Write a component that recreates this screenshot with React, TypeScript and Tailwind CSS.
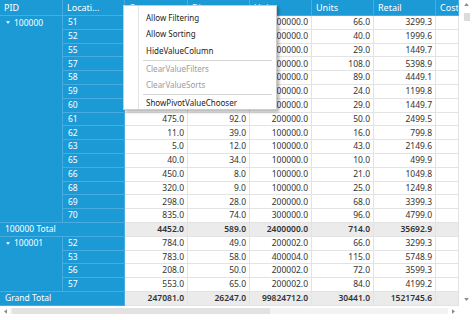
import React from 'react';

type Row = { loc: string; v: string[] };

const group1: Row[] = [
  { loc: '51', v: ['562.0', '41.0', '200000.0', '66.0', '3299.3'] },
  { loc: '52', v: ['12.0', '23.0', '100000.0', '40.0', '1999.6'] },
  { loc: '55', v: ['8.0', '36.0', '200000.0', '29.0', '1449.7'] },
  { loc: '57', v: ['853.0', '78.0', '300000.0', '108.0', '5398.9'] },
  { loc: '58', v: ['253.0', '55.0', '200000.0', '89.0', '4449.1'] },
  { loc: '59', v: ['17.0', '31.0', '100000.0', '24.0', '1199.8'] },
  { loc: '60', v: ['313.0', '29.0', '100000.0', '29.0', '1449.7'] },
  { loc: '61', v: ['475.0', '92.0', '200000.0', '50.0', '2499.5'] },
  { loc: '62', v: ['11.0', '39.0', '100000.0', '16.0', '799.8'] },
  { loc: '63', v: ['5.0', '12.0', '100000.0', '43.0', '2149.6'] },
  { loc: '65', v: ['40.0', '34.0', '100000.0', '10.0', '499.9'] },
  { loc: '66', v: ['450.0', '8.0', '100000.0', '21.0', '1049.8'] },
  { loc: '68', v: ['320.0', '9.0', '100000.0', '25.0', '1249.8'] },
  { loc: '69', v: ['298.0', '28.0', '200000.0', '68.0', '3399.3'] },
  { loc: '70', v: ['835.0', '74.0', '300000.0', '96.0', '4799.0'] },
];

const group2: Row[] = [
  { loc: '52', v: ['784.0', '49.0', '200002.0', '66.0', '3299.3'] },
  { loc: '53', v: ['783.0', '58.0', '400004.0', '115.0', '5748.9'] },
  { loc: '56', v: ['208.0', '50.0', '200002.0', '72.0', '3599.3'] },
  { loc: '57', v: ['553.0', '65.0', '200002.0', '84.0', '4199.2'] },
];

const total1 = ['4452.0', '589.0', '2400000.0', '714.0', '35692.9'];
const grand = ['247081.0', '26247.0', '99824712.0', '30441.0', '1521745.6'];

const blue = 'bg-[#1c9ad6] text-white border-r border-b border-[#47ade0]';

function Tri({ dir, className }: { dir: 'up' | 'down' | 'left' | 'right'; className?: string }) {
  const pts = {
    up: '0,4 3,0 6,4',
    down: '0,0 6,0 3,4',
    left: '4,0 4,6 0,3',
    right: '0,0 0,6 4,3',
  }[dir];
  const w = dir === 'up' || dir === 'down' ? 6 : 4;
  const h = dir === 'up' || dir === 'down' ? 4 : 6;
  return (
    <svg width={w} height={h} viewBox={`0 0 ${w} ${h}`} className={className}>
      <polygon points={pts} fill="currentColor" />
    </svg>
  );
}

function DataCells({ v, total }: { v: string[]; total?: boolean }) {
  return (
    <>
      {v.map((x, i) => (
        <div
          key={i}
          className={`flex items-center justify-end border-r border-b border-[#e3e3e3] pr-[3px] text-[#333] ${total ? 'bg-[#ebebeb] font-semibold' : ''}`}
        >
          {x}
        </div>
      ))}
      <div className={`border-r border-b border-[#e3e3e3] ${total ? 'bg-[#ebebeb]' : ''}`} />
    </>
  );
}

function PidCell({ label, span }: { label: string; span: string }) {
  return (
    <div className={`${blue} ${span}`}>
      <div className="flex h-[13.8px] items-center pl-[6px]">
        <Tri dir="down" className="mr-[4px] h-[3px] w-[4px]" />
        {label}
      </div>
    </div>
  );
}

export default function App() {
  return (
    <div className="relative h-[320px] w-[474px] overflow-hidden bg-white font-['Noto_Sans',sans-serif] text-[8.5px] leading-none">
      <div className="flex">
        <div className="grid w-[459px] grid-cols-[63px_62px_63px_62px_62px_62px_62px_23px] grid-rows-[16px_repeat(21,13.8px)]">
          {['PID', 'Locati...', 'Qty', 'Disc', 'Unit', 'Units', 'Retail', 'Cost'].map((h) => (
            <div
              key={h}
              className="flex items-center overflow-hidden whitespace-nowrap border-r border-b border-[#47ade0] bg-[#1c9ad6] pl-[4px] text-[9px] text-white"
            >
              {h}
            </div>
          ))}

          <PidCell label="100000" span="row-span-15" />
          {group1.map((r, i) => (
            <React.Fragment key={'a' + i}>
              <div className={`${blue} flex items-center pl-[5px]`}>{r.loc}</div>
              <DataCells v={r.v} />
            </React.Fragment>
          ))}

          <div className={`${blue} col-span-2 flex items-center pl-[5px]`}>100000 Total</div>
          <DataCells v={total1} total />

          <PidCell label="100001" span="row-span-4" />
          {group2.map((r, i) => (
            <React.Fragment key={'b' + i}>
              <div className={`${blue} flex items-center pl-[5px]`}>{r.loc}</div>
              <DataCells v={r.v} />
            </React.Fragment>
          ))}

          <div className={`${blue} col-span-2 flex items-center pl-[5px]`}>Grand Total</div>
          <DataCells v={grand} total />
        </div>

        {/* vertical scrollbar */}
        <div className="flex h-[306px] w-[15px] flex-col items-center text-[#8a8a8a]">
          <Tri dir="up" className="mt-[3px] h-[3px] w-[5px]" />
          <div className="mt-[7px] h-[8px] w-[6px] bg-[#dcdcdc]" />
          <div className="flex-1" />
          <Tri dir="down" className="mb-[5px] h-[3px] w-[5px]" />
        </div>
      </div>

      {/* horizontal scrollbar */}
      <div className="flex h-[10px] items-center text-[#8a8a8a]">
        <div className="flex w-[10px] justify-center">
          <Tri dir="left" className="h-[5px] w-[3px]" />
        </div>
        <div className="flex h-[6px] w-[438px] bg-[#f3f3f3] pl-[2px]">
          <div className="h-full w-[258px] bg-[#e2e2e2]" />
        </div>
        <div className="flex w-[10px] justify-center">
          <Tri dir="right" className="h-[5px] w-[3px]" />
        </div>
      </div>

      {/* context menu */}
      <div className="absolute left-[123px] top-[5px] h-[105px] w-[154px] border border-[#cccccc] bg-white pt-[4px] text-[8px] text-[#222] shadow-[2px_2px_3px_rgba(0,0,0,0.3)]">
        <div className="absolute bottom-0 left-[14px] top-0 w-px bg-[#e4e4e4]" />
        <div className="flex h-[16px] items-center pl-[22px]">Allow Filtering</div>
        <div className="flex h-[16px] items-center pl-[22px]">Allow Sorting</div>
        <div className="flex h-[17px] items-center pl-[22px]">HideValueColumn</div>
        <div className="ml-[19px] mr-[4px] flex h-[2px] items-center">
          <div className="h-px w-full bg-[#d4d4d4]" />
        </div>
        <div className="flex h-[16px] items-center pl-[22px] text-[#9c9c9c]">ClearValueFilters</div>
        <div className="flex h-[16px] items-center pl-[22px] text-[#9c9c9c]">ClearValueSorts</div>
        <div className="ml-[19px] mr-[4px] flex h-[2px] items-center">
          <div className="h-px w-full bg-[#d4d4d4]" />
        </div>
        <div className="flex h-[15px] items-center pl-[22px]">ShowPivotValueChooser</div>
      </div>
    </div>
  );
}
